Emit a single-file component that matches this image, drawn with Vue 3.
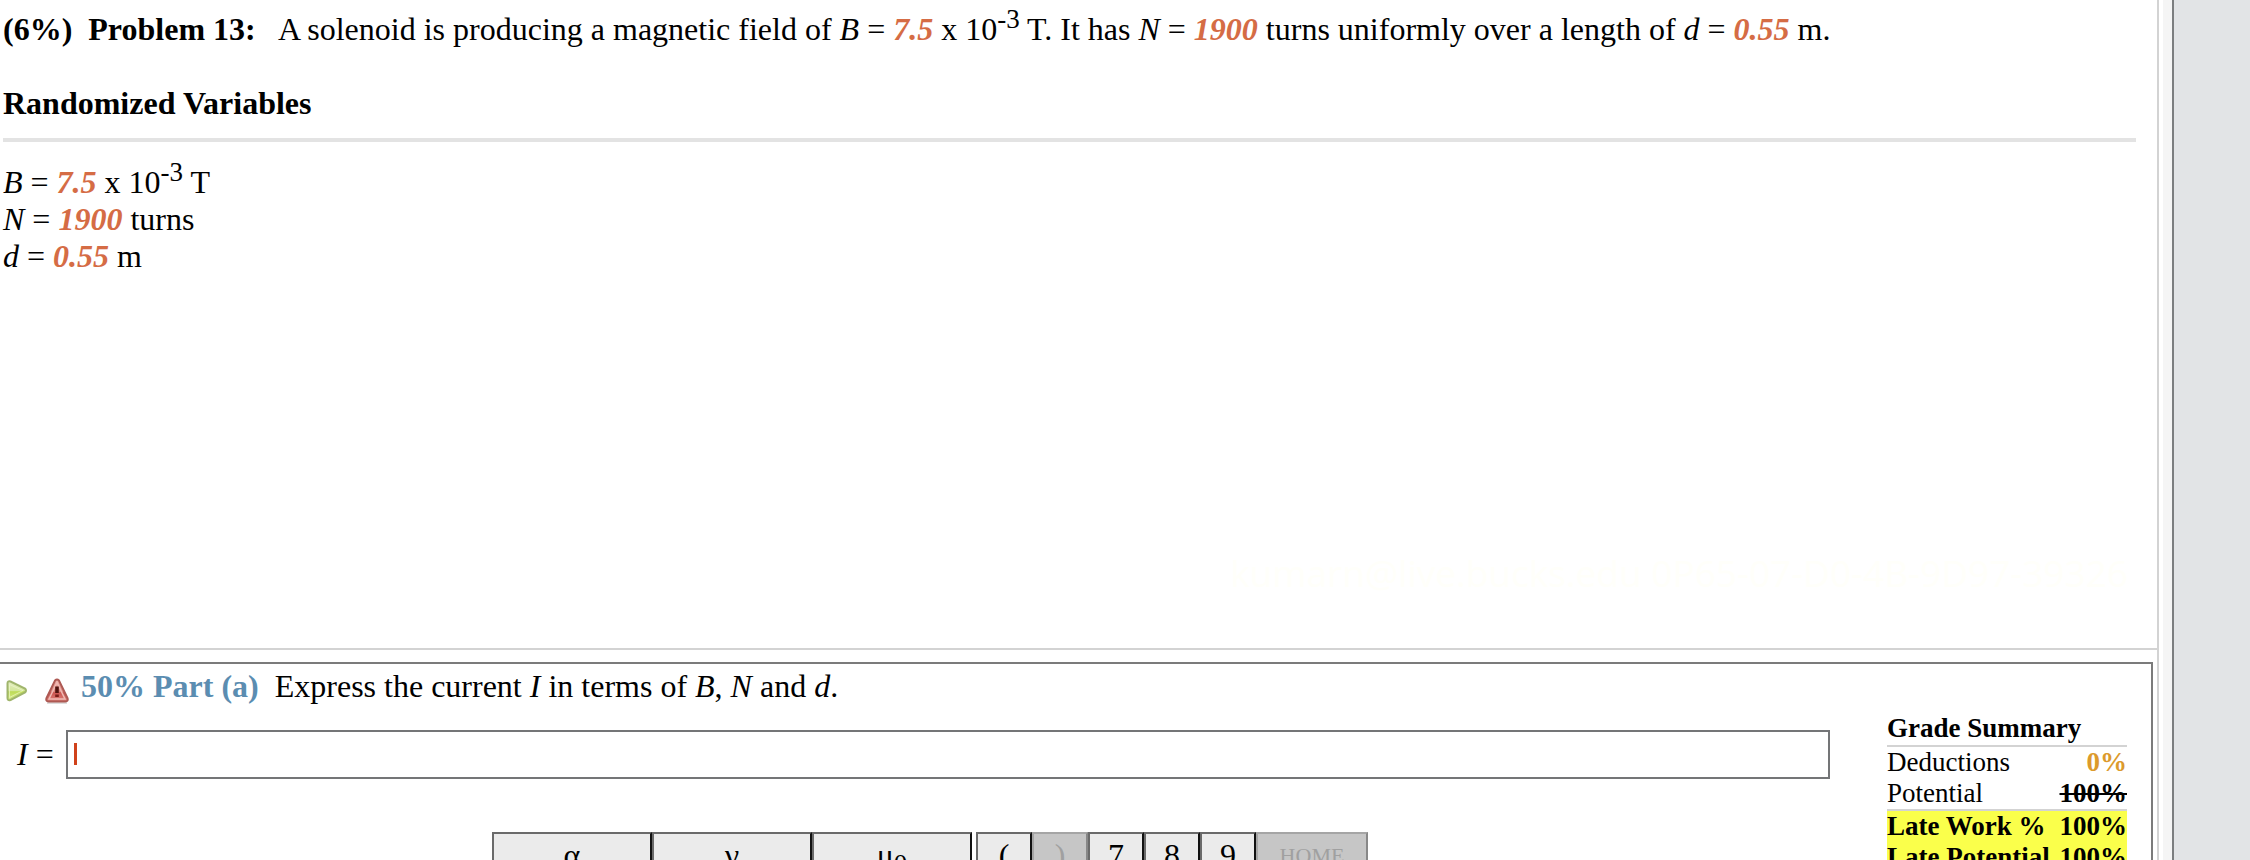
<script setup>
import { ref } from 'vue'

const answer = ref('')

const variables = [
  { name: 'B', value: '7.5', exp: '-3', unit: 'T' },
  { name: 'N', value: '1900', unit: 'turns' },
  { name: 'd', value: '0.55', unit: 'm' }
]

const symbols = [{ text: 'α' }, { text: 'γ' }, { text: 'μ', sub: '0' }]

const keys = [
  { text: '(' },
  { text: ')', disabled: true },
  { text: '7' },
  { text: '8' },
  { text: '9' },
  { text: 'HOME', disabled: true, wide: true }
]

const press = (key) => {
  answer.value += key.text + (key.sub || '')
}
</script>

<template>
  <div class="page">
    <main class="content">
      <section class="problem">
        <p class="line">
          <b>(6%) &nbsp;Problem 13:</b> &nbsp; A solenoid is producing a magnetic field of <i>B</i> =
          <em>7.5</em> x 10<sup>-3</sup> T. It has <i>N</i> = <em>1900</em> turns uniformly over a
          length of <i>d</i> = <em>0.55</em> m.
        </p>
        <h2>Randomized Variables</h2>
        <hr>
        <p v-for="v in variables" :key="v.name" class="line">
          <i>{{ v.name }}</i> = <em>{{ v.value }}</em>
          <template v-if="v.exp"> x 10<sup>{{ v.exp }}</sup></template>
          {{ v.unit }}
        </p>
        <p class="watermark">kumarn@live.bucks.edu 0P65-07-D0-4B-9D97-39326</p>
      </section>

      <section class="part">
        <div class="part-title">
          <svg class="play" width="22" height="24" viewBox="0 0 22 24">
            <defs>
              <linearGradient id="green" x1="0" y1="0" x2="0" y2="1">
                <stop offset="0" stop-color="#e4edc4" />
                <stop offset=".5" stop-color="#d4e79b" />
                <stop offset=".55" stop-color="#bddb55" />
                <stop offset="1" stop-color="#d9ec8c" />
              </linearGradient>
            </defs>
            <path d="M1.5 4.5Q1.5 1.5 4.5 2.5L19 9.5Q21 11.5 19 13.5L4.5 21Q1.5 22 1.5 19Z" fill="url(#green)" stroke="#a0b56c" stroke-width="2" />
            <path d="M3.5 5.5V18.5L17 11.5Z" fill="none" stroke="#eef6cc" stroke-width="1" opacity=".7" />
          </svg>
          <svg class="warn" width="24" height="26" viewBox="0 0 24 26">
            <defs>
              <linearGradient id="red" x1="0" y1="0" x2="0" y2="1">
                <stop offset="0" stop-color="#eeb2aa" />
                <stop offset=".55" stop-color="#db8078" />
                <stop offset=".6" stop-color="#cb5550" />
                <stop offset="1" stop-color="#dc827a" />
              </linearGradient>
            </defs>
            <path d="M2 25H22" stroke="#ddd" stroke-width="2" />
            <path d="M10 2.5Q12 .5 14 2.5L22.5 20Q23.5 23.5 20.5 23.5H3.5Q.5 23.5 1.5 20Z" fill="url(#red)" stroke="#ad5953" stroke-width="2" />
            <path d="M12 4.5L4 21H20Z" fill="none" stroke="#efbab4" stroke-width="1.5" />
            <path d="M10.2 8.5H13.8V15H10.2Z" fill="#50130f" />
            <path d="M10.2 16.5H13.8V19H10.2Z" fill="#7a1d18" />
          </svg>
          <p class="line"><b class="blue">50% Part (a)</b>&nbsp; Express the current <i>I</i> in terms of <i>B</i>, <i>N</i> and <i>d</i>.</p>
        </div>

        <div class="work">
          <div class="answer">
            <div class="entry">
              <label for="answer"><i>I</i> =</label>
              <div class="field">
                <input id="answer" v-model="answer" type="text" autocomplete="off">
                <span v-if="!answer" class="caret"></span>
              </div>
            </div>
            <div class="keypad">
              <div class="keys">
                <button v-for="s in symbols" :key="s.text" type="button" class="symbol" @click="press(s)">
                  {{ s.text }}<sub v-if="s.sub">{{ s.sub }}</sub>
                </button>
              </div>
              <div class="keys">
                <button
                  v-for="k in keys"
                  :key="k.text"
                  type="button"
                  :class="{ wide: k.wide }"
                  :disabled="k.disabled"
                  @click="press(k)"
                >{{ k.text }}</button>
              </div>
            </div>
          </div>

          <table class="grades">
            <caption>Grade Summary</caption>
            <tbody>
              <tr>
                <th>Deductions</th>
                <td class="orange">0%</td>
              </tr>
              <tr>
                <th>Potential</th>
                <td><s>100%</s></td>
              </tr>
            </tbody>
            <tbody class="late">
              <tr>
                <th>Late Work %</th>
                <td>100%</td>
              </tr>
              <tr>
                <th>Late Potential</th>
                <td>100%</td>
              </tr>
            </tbody>
          </table>
        </div>
      </section>
    </main>
    <div class="gutter"></div>
    <aside class="side"></aside>
  </div>
</template>

<style>
body {
  margin: 0;
  overflow: hidden;
}
</style>

<style scoped>
.page {
  display: flex;
  height: 100vh;
  overflow: hidden;
  background: #fff;
  color: #000;
  font-family: "Liberation Serif", "Times New Roman", serif;
  font-size: 32px;
  line-height: 37px;
}

.content {
  flex: 1;
  min-width: 0;
  border-right: 2px solid #d3d3d3;
}

.gutter {
  width: 9px;
  margin-left: 4px;
  background: #f5f5f5;
}

.side {
  width: 76px;
  border-left: 2px solid #7c7e80;
  background: #e2e4e6;
}

.problem {
  padding: 11px 21px 51px 3px;
  border-bottom: 2px solid #d3d3d3;
}

.line {
  margin: 0;
}

h2 {
  margin: 37px 0 16px;
  font-size: 32px;
}

hr {
  height: 4px;
  margin: 0 0 22px;
  border: 0;
  background: #e3e3e3;
}

em {
  color: #d56c45;
  font-weight: bold;
}

sup,
sub {
  font-size: 27px;
  line-height: 0;
}

.watermark {
  margin: 273px 8px 0 0;
  color: #fffffa;
  font-family: "Open Sans", sans-serif;
  font-size: 37px;
  line-height: 49px;
  text-align: right;
}

.part {
  margin: 12px 4px 0 0;
  padding-top: 4px;
  border: 2px solid #7b7b7b;
  border-left: 0;
  border-bottom: 0;
}

.part-title {
  display: flex;
  align-items: center;
  padding-left: 6px;
}

.play {
  margin-top: 8px;
}

.warn {
  margin: 8px 12px 0 17px;
}

.blue {
  color: #5b8db1;
}

.work {
  display: flex;
  align-items: flex-start;
  padding: 8px 24px 0 17px;
}

.answer {
  flex: 1;
  padding: 17px 57px 0 0;
}

.entry {
  display: flex;
  align-items: center;
  gap: 12px;
}

.field {
  position: relative;
  flex: 1;
}

input {
  display: block;
  box-sizing: border-box;
  width: 100%;
  height: 49px;
  padding: 0 6px;
  border: 2px solid #747577;
  outline: none;
  font: inherit;
  caret-color: #d0421b;
}

.caret {
  position: absolute;
  top: 13px;
  left: 8px;
  width: 3px;
  height: 22px;
  background: #d0421b;
  pointer-events: none;
}

.keypad {
  display: flex;
  justify-content: center;
  gap: 4px;
  margin-top: 53px;
  padding-left: 13px;
}

.keys {
  display: flex;
}

button {
  width: 56px;
  height: 46px;
  padding: 0;
  border: 2px solid;
  border-color: #6a6a6a #111 #111 #6a6a6a;
  border-radius: 0;
  background: #ebebeb;
  color: #000;
  font: inherit;
}

button.symbol {
  width: 160px;
}

button.wide {
  width: 112px;
  font-size: 22px;
}

button:disabled {
  border-color: #a5a5a5 #888 #888 #a5a5a5;
  background: #c6c6c6;
  color: #a0a0a0;
}

.grades {
  width: 240px;
  border-collapse: collapse;
  font-size: 27px;
  line-height: 31px;
}

.grades caption {
  padding-bottom: 1px;
  border-bottom: 2px solid #d3d3d3;
  font-weight: bold;
  text-align: left;
}

.grades th,
.grades td {
  padding: 0;
  font-weight: normal;
  text-align: left;
  white-space: nowrap;
}

.grades td {
  font-weight: bold;
  text-align: right;
}

.grades .orange {
  color: #dc9a2c;
}

.grades .late {
  border-top: 2px solid #d3d3d3;
  background: #faff4b;
}

.grades .late th {
  font-weight: bold;
}
</style>
